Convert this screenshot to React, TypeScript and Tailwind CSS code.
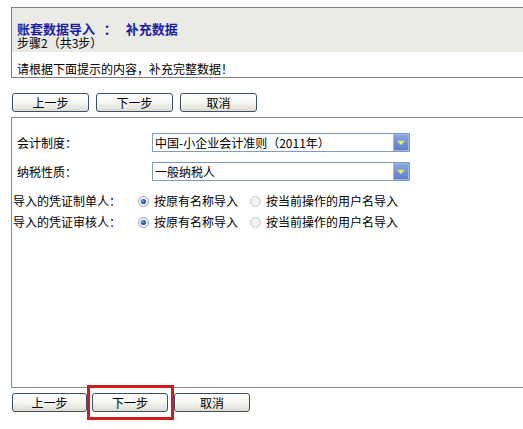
import React from "react";

type BtnProps = {
  label: string;
  className?: string;
};

function XpButton({ label, className }: BtnProps) {
  return (
    <button
      type="button"
      className={
        "flex h-[19px] items-center justify-center rounded-[3px] border border-[#3d4f66] bg-gradient-to-b from-[#ffffff] via-[#f6f6f2] to-[#dcdcd4] text-[12px] leading-none text-black " +
        (className ?? "")
      }
    >
      {label}
    </button>
  );
}

function SelectBox({ value }: { value: string }) {
  return (
    <div className="flex h-[19px] w-[258px] items-center border border-[#7f9db9] bg-white">
      <span className="flex-1 pl-[2px] text-[12px] leading-none text-black">{value}</span>
      <svg width="16" height="17" viewBox="0 0 16 17">
        <defs>
          <linearGradient id="arrowBg" x1="0" y1="0" x2="0" y2="1">
            <stop offset="0" stopColor="#8aa8e6" />
            <stop offset="1" stopColor="#5c7fcc" />
          </linearGradient>
        </defs>
        <rect x="0.5" y="0.5" width="15" height="16" fill="url(#arrowBg)" stroke="#9fb6e0" />
        <path d="M4.5 7 L11.5 7 L8 11 Z" fill="#e4f46a" stroke="#c9dc40" strokeWidth="0.5" />
      </svg>
    </div>
  );
}

function Radio({ checked }: { checked: boolean }) {
  return (
    <svg width="11" height="11" viewBox="0 0 11 11" className="shrink-0">
      <circle cx="5.5" cy="5.5" r="5" fill={checked ? "#eef0f2" : "#f2f2f0"} stroke={checked ? "#9aa6b4" : "#c6cacd"} />
      {checked && <circle cx="5.5" cy="5.5" r="2.6" fill="#2b62c4" />}
      {checked && <circle cx="4.8" cy="4.8" r="0.9" fill="#8fb4f0" />}
    </svg>
  );
}

function RadioRow({ label }: { label: string }) {
  return (
    <div className="flex h-[18px] items-center">
      <div className="w-[126px] pl-[1px]">{label}</div>
      <Radio checked />
      <span className="ml-[5px]">按原有名称导入</span>
      <div className="ml-[12px]">
        <Radio checked={false} />
      </div>
      <span className="ml-[5px]">按当前操作的用户名导入</span>
    </div>
  );
}

export default function App() {
  return (
    <div
      className="relative h-[429px] w-[523px] overflow-hidden bg-white text-[12px] leading-[14px] text-black"
      style={{ fontFamily: '"Noto Sans CJK SC", "Liberation Sans", sans-serif' }}
    >
      {/* header box */}
      <div className="ml-[11px] mt-[7px] border-b border-l border-t border-[#7f7f7f]">
        <div className="h-[44px] bg-[#ebebe6] pl-[5px] pt-[13px]">
          <p className="text-[13px] font-bold leading-[15px] text-[#1c1ca6]">
            账套数据导入&nbsp;&nbsp;&nbsp;：&nbsp;&nbsp;&nbsp;补充数据
          </p>
          <p className="leading-[14px]">步骤2（共3步）</p>
        </div>
        <div className="h-[25px] bg-white pl-[5px] pt-[10px]">
          请根据下面提示的内容，补充完整数据！
        </div>
      </div>

      {/* top buttons */}
      <div className="ml-[12px] mt-[15px] flex gap-[7px]">
        <XpButton label="上一步" className="w-[77px]" />
        <XpButton label="下一步" className="w-[77px]" />
        <XpButton label="取消" className="w-[77px]" />
      </div>

      {/* main panel */}
      <div className="ml-[11px] mt-[5px] h-[271px] border-b border-l border-t border-[#8a8a8a]">
        <div className="mt-[15px] flex h-[19px] items-center">
          <div className="w-[140px] pl-[5px]">会计制度：</div>
          <SelectBox value="中国-小企业会计准则（2011年）" />
        </div>
        <div className="mt-[10px] flex h-[19px] items-center">
          <div className="w-[140px] pl-[5px]">纳税性质：</div>
          <SelectBox value="一般纳税人" />
        </div>
        <div className="mt-[11px]">
          <RadioRow label="导入的凭证制单人：" />
        </div>
        <div className="mt-[3px]">
          <RadioRow label="导入的凭证审核人：" />
        </div>
      </div>

      {/* bottom buttons */}
      <div className="ml-[12px] mt-[5px] flex">
        <XpButton label="上一步" className="w-[75px]" />
        <XpButton label="下一步" className="ml-[5px] w-[76px]" />
        <XpButton label="取消" className="ml-[6px] w-[76px]" />
      </div>

      {/* highlight */}
      <div className="absolute left-[87px] top-[385px] h-[35px] w-[87px] border-[3px] border-[#cc1c1c]" />
    </div>
  );
}
